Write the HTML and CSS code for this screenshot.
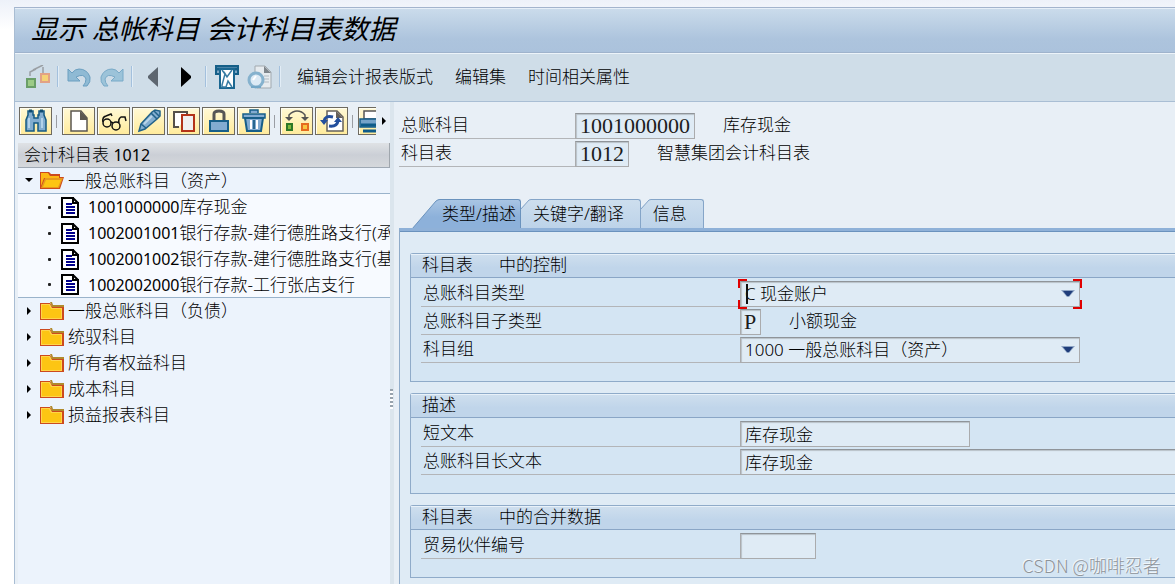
FILE: index.html
```html
<!DOCTYPE html>
<html lang="zh-CN">
<head>
  <meta charset="UTF-8" />
  <title>显示 总帐科目 会计科目表数据</title>
  <meta name="viewport" content="width=device-width, initial-scale=1.0" />
  <link rel="stylesheet" href="styles.css">
</head>
<body>

<!-- shared icons -->
<svg class="defs" width="0" height="0" aria-hidden="true">
  <defs>
    <linearGradient id="tabOn" x1="0" y1="0" x2="0" y2="1">
      <stop offset="0" stop-color="#a9c5e4" /><stop offset="0.6" stop-color="#8db1da" />
    </linearGradient>
    <linearGradient id="tabOff" x1="0" y1="0" x2="0" y2="1">
      <stop offset="0" stop-color="#cddeee" /><stop offset="1" stop-color="#bdd3e9" />
    </linearGradient>
    <symbol id="folder" viewBox="0 0 24 19">
      <path d="M0 1H10L12 4H24V18H0Z" fill="#cc4a1e" />
      <path d="M10 0H12L13 3H24V5H12Z" fill="#b08a2c" />
      <path d="M1 2H10L12 6H22V17H1Z" fill="#ffd54a" />
      <path d="M2 3H9L11 7H21V16H2Z" fill="#fdc513" />
    </symbol>
    <symbol id="folderOpen" viewBox="0 0 24 19">
      <path d="M0 1H9L11 3H20V6H24L20 18H0Z" fill="#cc4a1e" />
      <path d="M1 2H8L10 5H19V7H4L1 15Z" fill="#fdb813" />
      <path d="M5 7H23L19 17H1Z" fill="#e79a1c" />
      <path d="M6 9H21L18 16H3Z" fill="#fdc513" />
    </symbol>
    <symbol id="doc" viewBox="0 0 18 21">
      <path d="M1 1H12L17 6V20H1Z" fill="#fff" stroke="#000" stroke-width="2" />
      <path d="M12 0V6H18" fill="none" stroke="#000" stroke-width="2" />
      <path d="M5 7H11M5 10H14M5 13H14M5 16H14" stroke="#00008b" stroke-width="2" />
    </symbol>
    <symbol id="arrow" viewBox="0 0 14 8">
      <path d="M0 0H14L8 7H6Z" fill="#8ea4c4" />
      <path d="M2 1H12L8 6H6Z" fill="#1f3d7a" />
    </symbol>
  </defs>
</svg>

<div class="window">
  <h1 class="title">显示 总帐科目 会计科目表数据</h1>

  <!-- application toolbar -->
  <div class="appbar">
    <button class="tool" aria-label="层次结构">
      <svg width="24" height="24" viewBox="0 0 24 24">
        <path d="M4 11V7L10 4M7 5L17 0M17 2V8" fill="none" stroke="#9a9fa4" stroke-width="1.5" />
        <rect x="1" y="14" width="8" height="8" fill="#9ccb86" stroke="#6a9e68" stroke-width="2" />
        <rect x="15" y="9" width="8" height="8" fill="#f5d276" stroke="#e2a285" stroke-width="2" />
      </svg>
    </button>
    <i class="sep"></i>
    <button class="tool" aria-label="撤销">
      <svg width="24" height="20" viewBox="0 0 24 20">
        <path d="M1 2V14H13L9 10Q17 6 19 12Q19 16 16 19H20Q24 15 23 10Q20 2 12 2Q8 2 5 6Z" fill="#8fbad4" stroke="#6b9fc0" />
      </svg>
    </button>
    <button class="tool" aria-label="重做">
      <svg width="24" height="20" viewBox="0 0 24 20">
        <path d="M23 2V14H11L15 10Q7 6 5 12Q5 16 8 19H4Q0 15 1 10Q4 2 12 2Q16 2 19 6Z" fill="#9cc3d9" stroke="#79aac8" />
      </svg>
    </button>
    <i class="sep"></i>
    <button class="tool" aria-label="上一个">
      <svg width="10" height="20" viewBox="0 0 10 20"><path d="M10 0V20L0 11V9Z" fill="#5d6670" /></svg>
    </button>
    <button class="tool" aria-label="下一个">
      <svg width="10" height="20" viewBox="0 0 10 20"><path d="M0 0V20L10 11V9Z" fill="#000" /></svg>
    </button>
    <i class="sep"></i>
    <button class="tool" aria-label="传输">
      <svg width="24" height="24" viewBox="0 0 24 24">
        <path d="M1 1H23V9H1Z" fill="#7ea6c4" stroke="#155f88" stroke-width="2" />
        <path d="M2 4H22" stroke="#155f88" stroke-width="3" />
        <path d="M5 4H19V23H5Z" fill="#fff" stroke="#1b6791" stroke-width="2" />
        <path d="M7 5L10 9L7 20V22H11L13 16L17 22M17 5L12 12L9 7" fill="none" stroke="#397ca3" stroke-width="1.5" />
      </svg>
    </button>
    <button class="tool" aria-label="查找文档">
      <svg width="26" height="24" viewBox="0 0 26 24">
        <path d="M8 1H18L24 7V23H10V12L8 8Z" fill="#e6ebef" stroke="#a1a9af" />
        <path d="M17 1V8H24Z" fill="#7f868c" />
        <path d="M17 11H22M17 14H22M17 17H22" stroke="#b1bac1" />
        <circle cx="9" cy="15" r="7" fill="#dceaf5" stroke="#86b2ce" stroke-width="3" />
        <path d="M6 15L9 11" stroke="#fff" stroke-width="2" />
        <path d="M4 22H14" stroke="#73a7c7" stroke-width="2" />
      </svg>
    </button>
    <i class="sep"></i>
    <div class="menu">
      <button class="text-tool">编辑会计报表版式</button>
      <button class="text-tool">编辑集</button>
      <button class="text-tool">时间相关属性</button>
    </div>
  </div>

  <div class="content">
    <!-- account tree -->
    <div class="sidebar">
      <div class="treebar">
        <button class="icon-btn" aria-label="查找">
          <svg width="24" height="24" viewBox="0 0 24 24">
            <path d="M4 2H9V6H10V9H14V6H15V2H20V6L22 11V22H14V14H10V22H2V11L4 6Z" fill="#82add0" stroke="#155a83" stroke-width="1.5" />
            <path d="M5 2H8M16 2H19" stroke="#0f4c71" stroke-width="3" />
            <path d="M5 9V19M18 9V19" stroke="#b2d2ea" stroke-width="2" />
          </svg>
        </button>
        <i class="bar-sep"></i>
        <button class="icon-btn" aria-label="创建">
          <svg width="24" height="24" viewBox="0 0 24 24">
            <path d="M4 2H14L20 9V22H4Z" fill="#fff" stroke="#5b5750" stroke-width="1.5" />
            <path d="M13 2L20 9V11H13Z" fill="#5b5750" />
          </svg>
        </button>
        <button class="icon-btn" aria-label="显示">
          <svg width="26" height="24" viewBox="0 0 26 24">
            <circle cx="6" cy="14" r="4" fill="none" stroke="#111" stroke-width="1.5" />
            <circle cx="15" cy="17" r="4" fill="none" stroke="#111" stroke-width="1.5" />
            <path d="M10 13L12 14M2 13Q1 8 5 7L10 5L11 7M18 14Q17 10 20 8L24 8L25 12" fill="none" stroke="#111" stroke-width="1.5" />
          </svg>
        </button>
        <button class="icon-btn" aria-label="更改">
          <svg width="24" height="24" viewBox="0 0 24 24">
            <path d="M2 22L4 15L15 3L18 1L23 2V7L20 10L8 20Z" fill="#82aed0" stroke="#216289" stroke-width="1.5" />
            <path d="M14 4L20 10M17 2L22 7M4 15L9 19" stroke="#216289" stroke-width="1.5" />
            <path d="M7 15L15 7" stroke="#bad6e9" stroke-width="2" />
          </svg>
        </button>
        <button class="icon-btn" aria-label="复制">
          <svg width="24" height="24" viewBox="0 0 24 24">
            <path d="M7 18H2V3H15V5" fill="#fff" stroke="#555049" stroke-width="2" />
            <rect x="10" y="6" width="12" height="16" fill="#f0f0f0" stroke="#b33318" stroke-width="2" />
          </svg>
        </button>
        <button class="icon-btn" aria-label="锁定">
          <svg width="24" height="24" viewBox="0 0 24 24">
            <path d="M7 12V5Q7 2 12 2Q17 2 17 5V12" fill="none" stroke="#555" stroke-width="3" />
            <rect x="3" y="12" width="18" height="10" fill="#82abd1" stroke="#165e89" stroke-width="2" />
          </svg>
        </button>
        <button class="icon-btn" aria-label="删除">
          <svg width="24" height="24" viewBox="0 0 24 24">
            <path d="M8 4V1H16V4M1 5H23V9H1Z" fill="#82abd1" stroke="#165e89" stroke-width="1.5" />
            <path d="M3 9H21L19 22H5Z" fill="#82abd1" stroke="#165e89" stroke-width="2" />
            <path d="M9 11V20M15 11V20" stroke="#fff" stroke-width="2" />
            <path d="M12 11V20" stroke="#28678e" stroke-width="2" />
          </svg>
        </button>
        <i class="bar-sep"></i>
        <button class="icon-btn" aria-label="重新分配">
          <svg width="26" height="24" viewBox="0 0 26 24">
            <path d="M5 10V6Q9 2 13 2Q18 2 21 6V10" fill="none" stroke="#555" stroke-width="1.5" />
            <path d="M1 8H9L5 12ZM17 8H25L21 12Z" fill="#555" />
            <rect x="3" y="15" width="5" height="6" fill="#7fb83d" stroke="#2d7826" stroke-width="2" />
            <rect x="18" y="15" width="6" height="6" fill="#f8c640" stroke="#e56c20" stroke-width="2" />
          </svg>
        </button>
        <button class="icon-btn" aria-label="刷新">
          <svg width="26" height="24" viewBox="0 0 26 24">
            <path d="M8 2H18L24 8V22H8Z" fill="#fff" stroke="#66615b" stroke-width="1.5" />
            <path d="M17 2V9H24Z" fill="#66615b" />
            <path d="M5 12Q6 6 14 8M19 12Q18 18 10 17" fill="none" stroke="#234f9d" stroke-width="3" />
            <path d="M1 11H9L5 16ZM15 13L19 8L23 13Z" fill="#234f9d" />
          </svg>
        </button>
        <i class="bar-sep"></i>
        <button class="icon-btn cut" aria-label="打印">
          <svg width="24" height="24" viewBox="0 0 24 24">
            <path d="M5 2H20V10H5Z" fill="#fff" stroke="#555" stroke-width="1.5" />
            <path d="M1 10H23V18H1Z" fill="#75a3c9" stroke="#165e89" stroke-width="1.5" />
            <path d="M2 16H22M4 22H20" stroke="#0e5b89" stroke-width="3" />
          </svg>
        </button>
        <button class="more" aria-label="更多">
          <svg width="4" height="8" viewBox="0 0 4 8"><path d="M0 0V8L4 4Z" /></svg>
        </button>
      </div>

      <div class="tree-head">会计科目表 <span class="num">1012</span></div>
      <ul class="tree">
        <li class="node open">
          <svg class="twist" width="8" height="5" viewBox="0 0 8 5"><path d="M0 0H8L4 4Z" /></svg>
          <svg class="folder"><use href="#folderOpen" /></svg>一般总账科目（资产）
        </li>
        <li class="leaf"><i class="dot"></i><svg class="doc"><use href="#doc" /></svg><span class="num">1001000000</span>库存现金</li>
        <li class="leaf"><i class="dot"></i><svg class="doc"><use href="#doc" /></svg><span class="num">1002001001</span>银行存款-建行德胜路支行(承</li>
        <li class="leaf"><i class="dot"></i><svg class="doc"><use href="#doc" /></svg><span class="num">1002001002</span>银行存款-建行德胜路支行(基</li>
        <li class="leaf last"><i class="dot"></i><svg class="doc"><use href="#doc" /></svg><span class="num">1002002000</span>银行存款-工行张店支行</li>
        <li class="node">
          <svg class="twist" width="8" height="8" viewBox="0 0 8 8"><path d="M2 0V8L6 4Z" /></svg>
          <svg class="folder"><use href="#folder" /></svg>一般总账科目（负债）
        </li>
        <li class="node">
          <svg class="twist" width="8" height="8" viewBox="0 0 8 8"><path d="M2 0V8L6 4Z" /></svg>
          <svg class="folder"><use href="#folder" /></svg>统驭科目
        </li>
        <li class="node">
          <svg class="twist" width="8" height="8" viewBox="0 0 8 8"><path d="M2 0V8L6 4Z" /></svg>
          <svg class="folder"><use href="#folder" /></svg>所有者权益科目
        </li>
        <li class="node">
          <svg class="twist" width="8" height="8" viewBox="0 0 8 8"><path d="M2 0V8L6 4Z" /></svg>
          <svg class="folder"><use href="#folder" /></svg>成本科目
        </li>
        <li class="node">
          <svg class="twist" width="8" height="8" viewBox="0 0 8 8"><path d="M2 0V8L6 4Z" /></svg>
          <svg class="folder"><use href="#folder" /></svg>损益报表科目
        </li>
      </ul>
    </div>

    <div class="splitter"><i class="grip"></i></div>

    <!-- account data -->
    <div class="main">
      <div class="head-rows">
        <div class="row">
          <label class="head-label" for="account">总账科目</label>
          <input class="field code w-account" id="account" value="1001000000" readonly>
          <span class="desc">库存现金</span>
        </div>
        <div class="row">
          <label class="head-label" for="chart">科目表</label>
          <input class="field code w-chart" id="chart" value="1012" readonly>
          <span class="desc">智慧集团会计科目表</span>
        </div>
      </div>

      <div class="tabs" role="tablist">
        <button class="tab on" role="tab" aria-selected="true">
          <svg width="28" height="30" viewBox="0 0 28 30"><path d="M0 30L24 2Q26 0 28 0V30Z" fill="url(#tabOn)" /><path d="M0 30L24 2Q26 .5 28 .5" fill="none" stroke="#6a92bd" /></svg>
          <span class="tab-text">类型/描述</span>
        </button>
        <button class="tab" role="tab" aria-selected="false">
          <svg width="10" height="30" viewBox="0 0 10 30"><path d="M0 30V9L8 1L10 0V30Z" fill="url(#tabOff)" /><path d="M0 10L8 1L10 .5" fill="none" stroke="#85a5c8" /></svg>
          <span class="tab-text">关键字/翻译</span>
        </button>
        <button class="tab" role="tab" aria-selected="false">
          <svg width="10" height="30" viewBox="0 0 10 30"><path d="M0 30V9L8 1L10 0V30Z" fill="url(#tabOff)" /><path d="M0 10L8 1L10 .5" fill="none" stroke="#85a5c8" /></svg>
          <span class="tab-text">信息</span>
        </button>
      </div>

      <div class="panel">
        <section class="group">
          <h2 class="group-head"><span>科目表</span><span>中的控制</span></h2>
          <div class="group-body">
            <div class="row">
              <label class="label" for="type">总账科目类型</label>
              <div class="select">
                <select class="field" id="type"><option>C 现金账户</option></select>
                <svg class="select-arrow"><use href="#arrow" /></svg>
                <i class="caret"></i>
                <i class="corner tl"></i><i class="corner tr"></i><i class="corner bl"></i><i class="corner br"></i>
              </div>
            </div>
            <div class="row">
              <label class="label" for="subtype">总账科目子类型</label>
              <input class="field code w-char" id="subtype" value="P" readonly>
              <span class="desc">小额现金</span>
            </div>
            <div class="row">
              <label class="label" for="accgroup">科目组</label>
              <div class="select">
                <select class="field" id="accgroup"><option>1000 一般总账科目（资产）</option></select>
                <svg class="select-arrow"><use href="#arrow" /></svg>
              </div>
            </div>
          </div>
        </section>

        <section class="group">
          <h2 class="group-head"><span>描述</span></h2>
          <div class="group-body">
            <div class="row">
              <label class="label" for="short">短文本</label>
              <input class="field w-short" id="short" value="库存现金" readonly>
            </div>
            <div class="row">
              <label class="label" for="long">总账科目长文本</label>
              <input class="field w-long" id="long" value="库存现金" readonly>
            </div>
          </div>
        </section>

        <section class="group">
          <h2 class="group-head"><span>科目表</span><span>中的合并数据</span></h2>
          <div class="group-body">
            <div class="row">
              <label class="label" for="partner">贸易伙伴编号</label>
              <input class="field w-partner" id="partner" value="" readonly>
            </div>
          </div>
        </section>
      </div>
    </div>
  </div>
</div>

<div class="watermark">CSDN @咖啡忍者</div>

</body>
</html>
```

FILE: styles.css
```css
* { box-sizing: border-box; }

body {
  margin: 0;
  height: 100vh;
  overflow: hidden;
  padding: 7px 0 0 14px;
  background: linear-gradient(#edf1f9, #fff 30px);
  color: #000;
  font-family: "Noto Sans", "Noto Sans CJK SC", sans-serif;
  font-size: 17px;
  font-weight: 300;
  line-height: 24px;
}

button, input, select {
  font: inherit;
  color: inherit;
  margin: 0;
  padding: 0;
  border: none;
  background: none;
  border-radius: 0;
}

svg { display: block; flex: none; }
i { flex: none; }
.defs { position: absolute; }

.window {
  display: flex;
  flex-direction: column;
  height: 100%;
  border-left: 1px solid #a9bdd3;
  border-top: 1px solid #a3b4cd;
  background: #e8eff6;
}

.title {
  margin: 0;
  padding: 0 16px;
  height: 45px;
  border-top: 1px solid #e6eff8;
  border-bottom: 1px solid #9fb3cc;
  background: linear-gradient(#cadbeb, #adc4dd 70%, #abc2dc);
  font-family: "Liberation Serif", "Noto Sans CJK SC", serif;
  font-size: 27px;
  font-weight: 400;
  font-style: italic;
  line-height: 42px;
  white-space: nowrap;
}

/* application toolbar */
.appbar {
  display: flex;
  align-items: center;
  height: 49px;
  padding: 0 0 2px 6px;
  border-top: 1px solid #ecf3f9;
  border-bottom: 1px solid #a9bed4;
  background: #cfdde8;
}

.tool {
  width: 33px;
  display: flex;
  justify-content: center;
}

.sep {
  width: 2px;
  height: 21px;
  margin: 0 3px;
  background: #a3c0dd;
  border-right: 1px solid #e2edf6;
}

.menu {
  display: flex;
  gap: 22px;
  margin-left: 13px;
  white-space: nowrap;
}

/* tree side */
.content {
  flex: 1;
  display: flex;
  min-height: 0;
}

.sidebar {
  flex: none;
  width: 375px;
  padding-left: 3px;
  overflow: hidden;
}

.treebar {
  display: flex;
  align-items: center;
  gap: 2px;
  height: 41px;
  padding: 0 0 3px 1px;
}

.icon-btn {
  flex: none;
  display: flex;
  align-items: center;
  justify-content: center;
  width: 33px;
  height: 28px;
  border: 1px solid #6e6a60;
  background: linear-gradient(#fff9d6, #ffeb9c);
  box-shadow: inset 1px 1px #fffdf0;
}

.cut {
  width: 18px;
  justify-content: flex-start;
  overflow: hidden;
  border-right: none;
}

.bar-sep {
  width: 1px;
  height: 13px;
  margin: 0 3px 0 2px;
  background: #9a9da3;
}

.more { padding: 0 4px; }

.tree-head {
  height: 25px;
  padding-left: 6px;
  border-right: 1px solid #9fa6ad;
  border-bottom: 1px solid #9fa9b4;
  background: linear-gradient(#dfe2e5, #cbcfd6 50%, #d5d8dc);
}

.num {
  font-size: 16px;
  font-weight: 400;
}

.tree {
  height: 100%;
  margin: 0;
  padding: 0;
  list-style: none;
  background: #ecf3fc;
}

.node, .leaf {
  display: flex;
  align-items: center;
  height: 26px;
  white-space: nowrap;
}

.node { padding-left: 7px; }
.open, .last { border-bottom: 1px solid #9ab3cb; }
.twist { margin-right: 7px; }

.folder {
  width: 24px;
  height: 19px;
  margin-right: 4px;
}

.leaf {
  padding-left: 30px;
  background: #f7faff;
}

.dot {
  width: 3px;
  height: 3px;
  margin-right: 10px;
  border-radius: 1px;
  background: #222;
}

.doc {
  width: 18px;
  height: 21px;
  margin-right: 9px;
}

.splitter {
  flex: none;
  display: flex;
  align-items: center;
  width: 4px;
  padding-top: 112px;
  background: #dbe5ed;
}

.grip {
  width: 3px;
  height: 20px;
  background: repeating-linear-gradient(#98a3ad 0 2px, #fff 2px 4px);
}

/* data side */
.main {
  flex: 1;
  min-width: 0;
  padding: 11px 0 0 5px;
  display: flex;
  flex-direction: column;
}

.row {
  display: flex;
  height: 26px;
  margin-bottom: 2px;
  white-space: nowrap;
}

.head-label, .label {
  flex: none;
  padding-left: 2px;
  border-bottom: 1px solid #b3b5b8;
}

.head-label { width: 176px; }
.label { width: 319px; }
.desc { margin-left: 28px; }

.field {
  height: 26px;
  padding: 0 4px 2px;
  border: 1px solid #aaabad;
  border-top-color: #8f9499;
  background: #dfebf5;
  box-shadow: inset 1px 1px 1px #b9c1c8;
  outline: none;
}

.code {
  padding-bottom: 0;
  color: #1c1c1c;
  font-family: "Liberation Serif", "Noto Sans CJK SC", serif;
  font-size: 22px;
  font-weight: 400;
}

.w-account { width: 120px; }
.w-chart { width: 54px; }
.w-char { width: 21px; padding: 0 3px; }
.w-short { width: 230px; }
.w-long { flex: 1; border-right: none; }
.w-partner { width: 76px; }

.select {
  position: relative;
  width: 340px;
}

.select .field {
  width: 100%;
  padding-bottom: 0;
  appearance: none;
}

.select-arrow {
  position: absolute;
  right: 5px;
  top: 9px;
  width: 14px;
  height: 8px;
  pointer-events: none;
}

.caret {
  position: absolute;
  left: 6px;
  top: 3px;
  width: 2px;
  height: 20px;
  background: #111;
}

.corner {
  position: absolute;
  width: 9px;
  height: 9px;
  border: 0 solid #e00000;
}

.tl { left: -2px; top: -2px; border-width: 2px 0 0 2px; }
.tr { right: -2px; top: -2px; border-width: 2px 2px 0 0; }
.bl { left: -2px; bottom: -2px; border-width: 0 0 2px 2px; }
.br { right: -2px; bottom: -2px; border-width: 0 2px 2px 0; }

.tabs {
  display: flex;
  height: 29px;
  margin: 30px 0 0 13px;
}

.tab { display: flex; }

.tab-text {
  height: 29px;
  padding: 0 16px 0 2px;
  border-top: 1px solid #85a5c8;
  border-right: 1px solid #85a5c8;
  border-top-right-radius: 3px;
  background: linear-gradient(#cddeee, #bdd3e9);
  line-height: 28px;
}

.on .tab-text {
  padding-right: 4px;
  border-color: #6a92bd;
  background: linear-gradient(#a9c5e4, #8db1da 60%);
}

.panel {
  flex: 1;
  display: flex;
  flex-direction: column;
  gap: 11px;
  padding: 22px 0 0 10px;
  border-top: 3px solid #8fb1d8;
  border-left: 1px solid #8fabc9;
  background: #dfebf5;
  box-shadow: inset 0 1px #6a92bd;
}

.group {
  flex: none;
  border: 1px solid #8fabc9;
  border-right: none;
  border-top-left-radius: 3px;
  background: #d4e5f3;
}

.group-head {
  display: flex;
  gap: 26px;
  height: 24px;
  margin: 0;
  padding-left: 11px;
  border-bottom: 1px solid #8aa6c6;
  box-shadow: inset 0 1px #e8f1f9;
  background: linear-gradient(#cfdfee, #c0d5ea 60%);
  font-size: 17px;
  font-weight: 300;
  line-height: 22px;
}

.group-body { padding: 3px 0 16px 10px; }

.watermark {
  position: absolute;
  right: 14px;
  bottom: 7px;
  color: #8f9499;
  font-family: "Noto Sans CJK SC", sans-serif;
  font-size: 18px;
  text-shadow: -1px -1px #f4f8fb;
}
```
